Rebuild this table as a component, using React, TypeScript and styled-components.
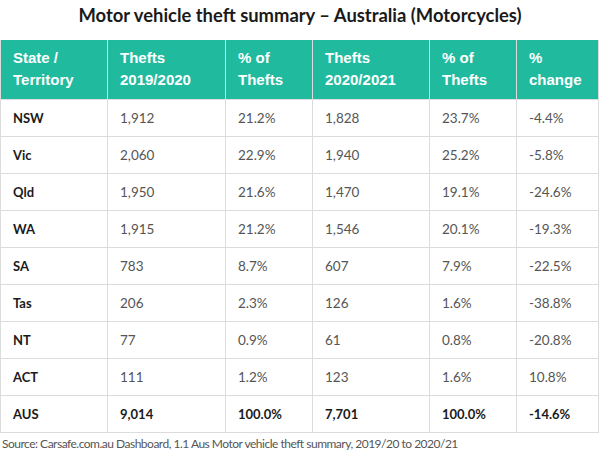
import React from "react";
import styled, { createGlobalStyle } from "styled-components";

const Global = createGlobalStyle`
  html, body { margin: 0; padding: 0; background: #fff; }
  body { width: 600px; height: 454px; overflow: hidden; }
`;

const Page = styled.div`
  display: flex;
  flex-direction: column;
  width: 600px;
`;

const Title = styled.h1`
  margin: 0;
  height: 40px;
  display: flex;
  align-items: center;
  justify-content: center;
  font-family: Lato, "Open Sans", sans-serif;
  font-weight: 700;
  font-size: 18.4px;
  color: #1a1a1a;
  padding-bottom: 10px;
  box-sizing: border-box;
`;

const Table = styled.table`
  border-collapse: collapse;
  width: 598px;
  table-layout: fixed;
`;

const Th = styled.th<{ $w: number }>`
  width: ${(p) => p.$w}px;
  height: 59px;
  box-sizing: border-box;
  background: #20bb9f;
  color: #fff;
  text-align: left;
  vertical-align: middle;
  padding: 0 12px;
  font-family: "Liberation Sans", Arial, sans-serif;
  font-weight: 700;
  font-size: 15px;
  line-height: 22px;
  border: 1px solid #dcdcdc;
  border-top: none;
`;

const Td = styled.td<{ $bold?: boolean }>`
  height: 37px;
  box-sizing: border-box;
  padding: 0 12px;
  border: 1px solid #dcdcdc;
  font-family: Lato, "Open Sans", sans-serif;
  font-size: ${(p) => (p.$bold ? "13px" : "13.5px")};
  font-weight: ${(p) => (p.$bold ? 700 : 400)};
  color: ${(p) => (p.$bold ? "#1a1a1a" : "#555")};
  vertical-align: middle;
`;

const Source = styled.div`
  font-family: Lato, "Open Sans", sans-serif;
  font-size: 12px;
  letter-spacing: -0.5px;
  color: #555;
  padding: 3px 0 0 2px;
`;

const widths = [107, 118, 87, 117, 87, 82];
const headers = [
  ["State /", "Territory"],
  ["Thefts", "2019/2020"],
  ["% of", "Thefts"],
  ["Thefts", "2020/2021"],
  ["% of", "Thefts"],
  ["%", "change"],
];

const rows = [
  ["NSW", "1,912", "21.2%", "1,828", "23.7%", "-4.4%"],
  ["Vic", "2,060", "22.9%", "1,940", "25.2%", "-5.8%"],
  ["Qld", "1,950", "21.6%", "1,470", "19.1%", "-24.6%"],
  ["WA", "1,915", "21.2%", "1,546", "20.1%", "-19.3%"],
  ["SA", "783", "8.7%", "607", "7.9%", "-22.5%"],
  ["Tas", "206", "2.3%", "126", "1.6%", "-38.8%"],
  ["NT", "77", "0.9%", "61", "0.8%", "-20.8%"],
  ["ACT", "111", "1.2%", "123", "1.6%", "10.8%"],
];
const total = ["AUS", "9,014", "100.0%", "7,701", "100.0%", "-14.6%"];

export default function App() {
  return (
    <Page>
      <Global />
      <Title>Motor vehicle theft summary – Australia (Motorcycles)</Title>
      <Table>
        <thead>
          <tr>
            {headers.map((h, i) => (
              <Th key={i} $w={widths[i]}>
                {h[0]}
                <br />
                {h[1]}
              </Th>
            ))}
          </tr>
        </thead>
        <tbody>
          {rows.map((r) => (
            <tr key={r[0]}>
              {r.map((c, i) => (
                <Td key={i} $bold={i === 0}>
                  {c}
                </Td>
              ))}
            </tr>
          ))}
          <tr>
            {total.map((c, i) => (
              <Td key={i} $bold>
                {c}
              </Td>
            ))}
          </tr>
        </tbody>
      </Table>
      <Source>
        Source: Carsafe.com.au Dashboard, 1.1 Aus Motor vehicle theft summary, 2019/20 to 2020/21
      </Source>
    </Page>
  );
}
